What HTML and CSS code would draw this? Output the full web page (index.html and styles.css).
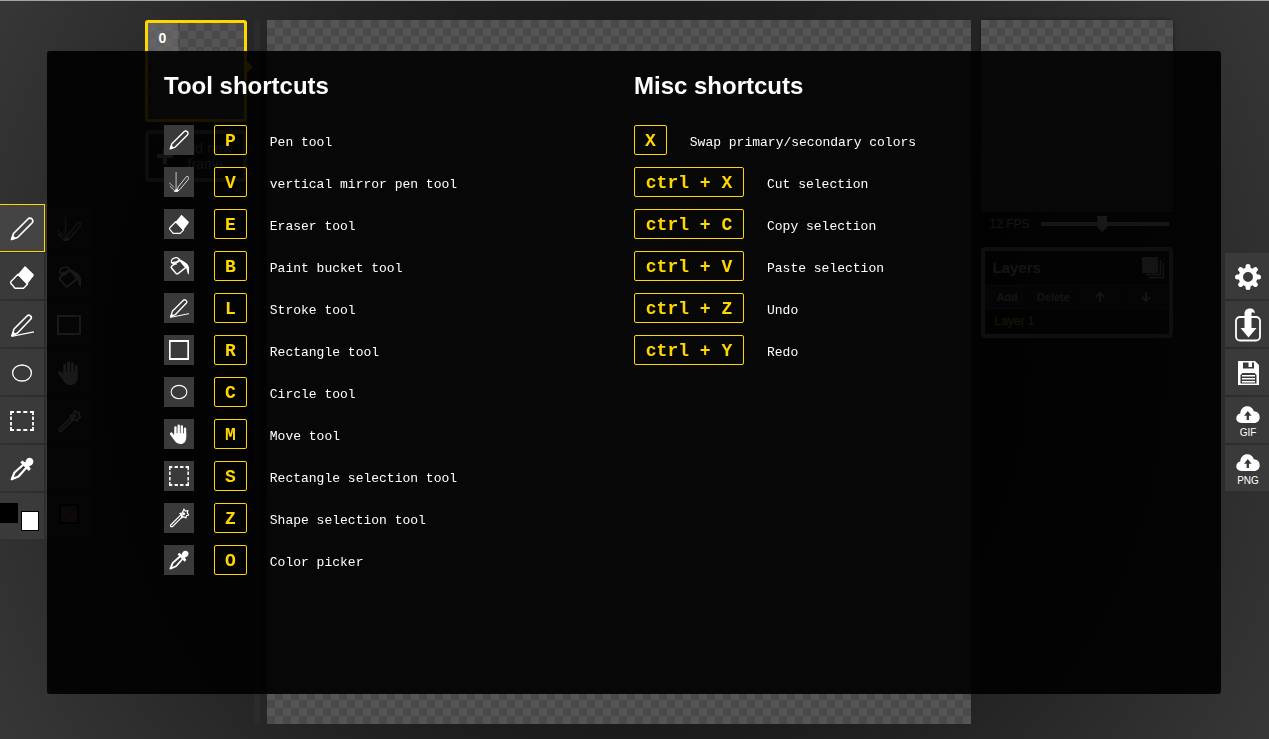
FILE: index.html
```html
<!DOCTYPE html>
<html lang="en">
<head>
  <meta charset="UTF-8" />
  <title>Piskel</title>
  <link rel="stylesheet" href="styles.css">
</head>
<body>
  <!-- icon sprite -->
  <svg class="sprite" width="0" height="0" aria-hidden="true">
    <symbol id="pen" viewBox="0 0 24 24">
      <path d="M1.5 22.5l2-6L18 2a2.500 2.500 0 0 1 4 4L7.500 20.500z" fill="none" stroke="currentColor" stroke-width="1.700" stroke-linejoin="round"/>
      <path d="M.8 23.200l1.800-5.200 3.400 3.400z"/>
    </symbol>
    <symbol id="mirror" viewBox="0 0 24 24">
      <path d="M8.500 0v22" fill="none" stroke="currentColor" stroke-width="1.400" opacity=".6"/>
      <path d="M0 12.500l6 6M1 17l7.500 7" fill="none" stroke="currentColor" stroke-width="1.200" opacity=".7"/>
      <path d="M9 24l2-6L20.500 6a1.800 1.800 0 0 1 2.900 2.400L13.500 20.500z" fill="none" stroke="currentColor" stroke-width="1.200" opacity=".8"/>
      <path d="M5.500 23.500l3-3.500 4 2-3.500 2.500z" opacity=".8"/>
    </symbol>
    <symbol id="eraser" viewBox="0 0 24 24">
      <path d="M15 1l8.300 8q.8 1 0 2.200L17 19.500 8 9.300z"/>
      <path d="M8 9.300l-7 7.200q-.8 1 0 2l4 4.700h8.500l4-4z" fill="none" stroke="currentColor" stroke-width="1.400" stroke-linejoin="round"/>
    </symbol>
    <symbol id="bucket" viewBox="0 0 24 24">
      <path d="M12.500 4.500L3 12.500q-1 1 0 2L8.600 21q1 1 2.200.2l9.400-7.400z" fill="none" stroke="currentColor" stroke-width="1.800" stroke-linejoin="round"/>
      <path d="M9.500 9.500C5 10 2.500 9 2.800 6 3.200 2.500 8.500 1 11.500 3c2 1.500 1 4-1.500 4.500-3 .3-4-1-6 1" fill="none" stroke="currentColor" stroke-width="1.500"/>
      <path d="M12 3.500c5 2.500 11.500 5 12 10.500V22c-2 0-2-4-3.600-8.200z"/>
    </symbol>
    <symbol id="stroke" viewBox="0 0 24 24">
      <path d="M2 22.500l2-6.500L17 3a2.400 2.400 0 0 1 3.600 3.300L7.500 20z" fill="none" stroke="currentColor" stroke-width="1.600" stroke-linejoin="round"/>
      <path d="M1.500 23.300L24 18.800" fill="none" stroke="currentColor" stroke-width="1.200"/>
      <path d="M1 23.500l2-5 3 2.700z"/>
    </symbol>
    <symbol id="rect" viewBox="0 0 24 20" preserveAspectRatio="none">
      <rect x="1" y="1" width="22" height="18" fill="none" stroke="currentColor" stroke-width="2"/>
    </symbol>
    <symbol id="circle" viewBox="0 0 24 24">
      <ellipse cx="12" cy="12" rx="9.400" ry="8" fill="none" stroke="currentColor" stroke-width="1.300"/>
    </symbol>
    <symbol id="hand" viewBox="0 0 24 24">
      <g fill="none" stroke="currentColor" stroke-width="2.900" stroke-linecap="round">
        <path d="M7.700 4.200V14M11.600 2v12M15.400 2.800V14M19.200 5.500V15"/>
        <path d="M2.800 11.800l4.200 5.700" stroke-width="3.400"/>
      </g>
      <path d="M6.300 11h14.300v6c0 4-3 7-7.200 7-3.600 0-5.600-2-7.400-5z"/>
    </symbol>
    <symbol id="select" viewBox="0 0 24 20" preserveAspectRatio="none">
      <path d="M0 1h4M6.700 1h4M13.300 1h4M20 1h4M0 19h4M6.700 19h4M13.300 19h4M20 19h4M1 0v4M1 5.600v3.400M1 11v3.400M1 16v4M23 0v4M23 5.600v3.400M23 11v3.400M23 16v4" fill="none" stroke="currentColor" stroke-width="1.800"/>
    </symbol>
    <symbol id="wand" viewBox="0 0 24 24">
      <path d="M14.500 8L2 20.500q-.6 2.500 2 1.800L16.500 10z" fill="none" stroke="currentColor" stroke-width="1.500"/>
      <path d="M18 1.500l1.500 2.200 3-.4-.6 2.800 1.800 2.200-2.800.9-.6 2.700-2.500-1.300-2.700 1 .2-2.800-2-2.100 2.700-1z" fill="none" stroke="currentColor" stroke-width="1.500"/>
      <circle cx="17.500" cy="7" r="1.800"/>
    </symbol>
    <symbol id="picker" viewBox="0 0 24 24">
      <path d="M13.500 7.500L4.500 15.500 1.700 22.300 8.500 19.500l8-9" fill="none" stroke="currentColor" stroke-width="2.200" stroke-linejoin="round"/>
      <path d="M10.300 5.400l2-2 3 2.200C15.800 2 18 .5 20.500.9c2.200.4 3.300 2.500 2.800 4.500-.4 2-2.300 3.200-4.300 3.600l1.800 3-2 2z"/>
    </symbol>
    <symbol id="gear" viewBox="0 0 26 26">
      <circle cx="13" cy="13" r="7.200" fill="none" stroke="currentColor" stroke-width="4.400"/>
      <path d="M13 2.500v3M13 20.500v3M2.500 13h3M20.500 13h3M5.600 5.600l2 2M18.400 18.400l2 2M5.600 20.400l2-2M18.400 7.600l2-2" fill="none" stroke="currentColor" stroke-width="5" stroke-linecap="round"/>
    </symbol>
    <symbol id="import" viewBox="0 0 26 34">
      <rect x="1" y="9" width="24" height="23.500" rx="4" fill="none" stroke="currentColor" stroke-width="1.800"/>
      <path d="M9.500 20V6c0-4 2.500-5.500 5.500-5.500 3.500 0 5 2 4.500 5-1-1.500-2.500-1.800-3-.5v15h5L13.500 29.500 5.500 20z"/>
    </symbol>
    <symbol id="save" viewBox="0 0 24 24">
      <path fill-rule="evenodd" d="M2 0h17l4 4v20H2zM7 1.500v6h11v-6h-2v4.500h-3.500V1.500zM4.500 14v8.500h16V14l-2-2h-12z"/>
      <path d="M6 14.800h13M6 17.800h13M6 20.800h13" stroke="currentColor" stroke-width="1.500"/>
    </symbol>
    <symbol id="cloud" viewBox="0 0 24 17">
      <path fill-rule="evenodd" d="M5.500 17C2 17 .3 15 .3 12.300c0-2.500 1.500-4.300 4-4.800C4.500 3 7.500.3 11.300.3c3.500 0 5.700 2 6.500 5 3.500.2 5.900 2.500 5.900 5.900S21.500 17 18 17zM11.800 5L8 9.800h2.600V14H13V9.800h2.600z"/>
    </symbol>
    <symbol id="layers" viewBox="0 0 22 22">
      <path d="M0 0h16v16H0z"/>
      <path d="M18.500 3v14.500H3.500M21.500 6v14.500H6.500" fill="none" stroke="currentColor" stroke-width="1.500"/>
    </symbol>
  </svg>

  <div class="app">
    <nav class="tools" aria-label="Tools">
      <button class="tool selected" aria-label="Pen"><svg><use href="#pen"/></svg></button>
      <button class="tool" aria-label="Vertical mirror pen"><svg><use href="#mirror"/></svg></button>
      <button class="tool" aria-label="Eraser"><svg><use href="#eraser"/></svg></button>
      <button class="tool" aria-label="Paint bucket"><svg><use href="#bucket"/></svg></button>
      <button class="tool" aria-label="Stroke"><svg><use href="#stroke"/></svg></button>
      <button class="tool" aria-label="Rectangle"><svg class="wide"><use href="#rect"/></svg></button>
      <button class="tool" aria-label="Circle"><svg><use href="#circle"/></svg></button>
      <button class="tool" aria-label="Move"><svg><use href="#hand"/></svg></button>
      <button class="tool" aria-label="Rectangle selection"><svg class="wide"><use href="#select"/></svg></button>
      <button class="tool" aria-label="Shape selection"><svg><use href="#wand"/></svg></button>
      <button class="tool" aria-label="Color picker"><svg><use href="#picker"/></svg></button>
      <div class="tool"></div>
      <div class="tool colors">
        <button class="swatch primary" aria-label="Primary color"></button>
        <button class="swatch secondary" aria-label="Secondary color"></button>
      </div>
      <div class="tool">
        <button class="swatch transparent" aria-label="Transparent">
          <svg viewBox="0 0 16 16"><path d="M0 16L16 0" stroke="#f00" stroke-width="1.500"/></svg>
        </button>
      </div>
    </nav>

    <main class="editor">
      <section class="frames">
        <div class="frame checker"><span class="frame-number">0</span></div>
        <button class="add-frame"><span class="plus"></span><span>Add new frame</span></button>
      </section>
      <div class="divider"></div>
      <div class="canvas checker"></div>
      <aside class="side">
        <div class="preview checker"></div>
        <div class="fps">
          <label for="fps">12 FPS</label>
          <input type="range" id="fps" min="0" max="25" value="12">
        </div>
        <section class="layers">
          <h3>Layers <svg><use href="#layers"/></svg></h3>
          <div class="layer-buttons">
            <button>Add</button>
            <button>Delete</button>
            <button aria-label="Move up"><svg viewBox="0 0 10 10"><path d="M5 10V1M1 5l4-4 4 4"/></svg></button>
            <button aria-label="Move down"><svg viewBox="0 0 10 10"><path d="M5 0v9M1 5l4 4 4-4"/></svg></button>
          </div>
          <p class="layer">Layer 1</p>
        </section>
      </aside>
    </main>

    <nav class="actions" aria-label="Actions">
      <button class="tool" aria-label="Settings"><svg class="gear"><use href="#gear"/></svg></button>
      <button class="tool" aria-label="Import"><svg class="import"><use href="#import"/></svg></button>
      <button class="tool" aria-label="Save"><svg><use href="#save"/></svg></button>
      <button class="tool export"><svg><use href="#cloud"/></svg>GIF</button>
      <button class="tool export"><svg><use href="#cloud"/></svg>PNG</button>
    </nav>
  </div>

  <div class="cheatsheet" role="dialog" aria-label="Keyboard shortcuts">
    <section>
      <h2>Tool shortcuts</h2>
      <ul>
        <li><span class="icon"><svg><use href="#pen"/></svg></span><kbd>P</kbd><span class="desc">Pen tool</span></li>
        <li><span class="icon"><svg><use href="#mirror"/></svg></span><kbd>V</kbd><span class="desc">vertical mirror pen tool</span></li>
        <li><span class="icon"><svg><use href="#eraser"/></svg></span><kbd>E</kbd><span class="desc">Eraser tool</span></li>
        <li><span class="icon"><svg><use href="#bucket"/></svg></span><kbd>B</kbd><span class="desc">Paint bucket tool</span></li>
        <li><span class="icon"><svg><use href="#stroke"/></svg></span><kbd>L</kbd><span class="desc">Stroke tool</span></li>
        <li><span class="icon"><svg><use href="#rect"/></svg></span><kbd>R</kbd><span class="desc">Rectangle tool</span></li>
        <li><span class="icon"><svg><use href="#circle"/></svg></span><kbd>C</kbd><span class="desc">Circle tool</span></li>
        <li><span class="icon"><svg><use href="#hand"/></svg></span><kbd>M</kbd><span class="desc">Move tool</span></li>
        <li><span class="icon"><svg><use href="#select"/></svg></span><kbd>S</kbd><span class="desc">Rectangle selection tool</span></li>
        <li><span class="icon"><svg><use href="#wand"/></svg></span><kbd>Z</kbd><span class="desc">Shape selection tool</span></li>
        <li><span class="icon"><svg><use href="#picker"/></svg></span><kbd>O</kbd><span class="desc">Color picker</span></li>
      </ul>
    </section>
    <section>
      <h2>Misc shortcuts</h2>
      <ul>
        <li><kbd>X</kbd><span class="desc">Swap primary/secondary colors</span></li>
        <li><kbd class="combo">ctrl + X</kbd><span class="desc">Cut selection</span></li>
        <li><kbd class="combo">ctrl + C</kbd><span class="desc">Copy selection</span></li>
        <li><kbd class="combo">ctrl + V</kbd><span class="desc">Paste selection</span></li>
        <li><kbd class="combo">ctrl + Z</kbd><span class="desc">Undo</span></li>
        <li><kbd class="combo">ctrl + Y</kbd><span class="desc">Redo</span></li>
      </ul>
    </section>
  </div>
</body>
</html>
```
FILE: styles.css
```css
:root {
  --gold: #ffd700;
  --cell: #3a3a3a;
  --grey: #ccc;
}

* {
  box-sizing: border-box;
}

body {
  margin: 0;
  font-family: "Liberation Sans", Arial, sans-serif;
  font-size: 12px;
  color: #fff;
  background: radial-gradient(circle, #000, #373737) fixed;
}

button {
  margin: 0;
  padding: 0;
  border: none;
  color: inherit;
  font-family: inherit;
  cursor: pointer;
}

svg {
  display: block;
  fill: currentColor;
}

.sprite {
  position: absolute;
}

.app {
  display: flex;
  height: 100vh;
  border-top: 1px solid #a5a5a5;
}

/* side toolbars */
.tools,
.actions {
  display: grid;
  align-content: center;
  grid-auto-rows: 46px;
  gap: 2px;
  padding-top: 4px;
}

.tools {
  grid-template-columns: 44px 46px;
}

.actions {
  grid-template-columns: 44px;
}

.tool {
  display: flex;
  align-items: center;
  justify-content: center;
  padding-top: 2px;
  background: var(--cell);
}

.actions .tool {
  padding-left: 2px;
}

.tool svg {
  width: 24px;
  height: 24px;
}

.tool svg.wide {
  height: 20px;
}

.tool svg.gear {
  width: 26px;
  height: 26px;
}

.tool svg.import {
  width: 26px;
  height: 34px;
}

.tool.selected {
  background: #444;
  outline: 1px solid var(--gold);
}

.export {
  flex-direction: column;
  gap: 4px;
  padding-top: 4px;
  font-size: 10px;
  line-height: 12px;
}

.tool.export svg {
  height: 17px;
}

.colors {
  justify-content: flex-start;
  gap: 3px;
}

.swatch {
  width: 18px;
  height: 20px;
  border: 1px solid #000;
}

.primary {
  background: #000;
  margin-bottom: 8px;
}

.secondary {
  background: #fff;
  margin-top: 8px;
}

.transparent {
  width: 20px;
  margin-bottom: 6px;
  background: #666;
  border-width: 2px;
}

.tool .swatch svg {
  width: 16px;
  height: 16px;
}

/* drawing area */
.editor {
  flex: 1;
  display: flex;
  justify-content: center;
  padding: 19px 0 15px;
}

.checker {
  background: repeating-conic-gradient(#4a4a4a 0 25%, #555 0 50%) 0 0 / 16px 16px;
}

.frames {
  width: 102px;
}

.frame {
  position: relative;
  aspect-ratio: 1;
  margin-bottom: 8px;
  border: 3px solid var(--gold);
  border-radius: 3px;
}

.frame::after {
  content: "";
  position: absolute;
  left: 100%;
  top: 38px;
  margin-left: 3px;
  border: 6px solid transparent;
  border-left-color: var(--gold);
  border-right: none;
}

.frame-number {
  display: block;
  width: 30px;
  height: 30px;
  font-size: 14px;
  font-weight: bold;
  line-height: 30px;
  text-align: center;
  background: rgba(110, 110, 110, 0.6);
}

.add-frame {
  display: flex;
  align-items: center;
  gap: 4px;
  width: 100%;
  padding: 6px 8px;
  border: 4px solid #888;
  border-radius: 4px;
  background: none;
  color: #aaa;
  font-size: 14px;
  line-height: 16px;
}

.plus {
  flex: none;
  width: 16px;
  height: 16px;
  background:
    linear-gradient(#ccc, #ccc) center / 4px 16px no-repeat,
    linear-gradient(#ccc, #ccc) center / 16px 4px no-repeat;
}

.divider {
  width: 6px;
  margin: 0 7px;
  background: #2b2b2b;
}

.canvas {
  height: 100%;
  aspect-ratio: 1;
}

.side {
  width: 192px;
  margin-left: 10px;
}

.preview {
  aspect-ratio: 1;
  box-shadow: 0 0 4px rgba(0, 0, 0, 0.4);
}

.fps {
  display: flex;
  align-items: center;
  gap: 11px;
  height: 24px;
  padding: 0 4px 0 9px;
  color: var(--grey);
}

.fps input {
  flex: 1;
  min-width: 0;
  height: 16px;
  margin: 0;
  appearance: none;
  background: linear-gradient(#ddd, #ddd) center / 100% 4px no-repeat;
}

.fps input::-webkit-slider-thumb {
  appearance: none;
  width: 10px;
  height: 16px;
  background: #eee;
  clip-path: polygon(0 0, 100% 0, 100% 70%, 50% 100%, 0 70%);
}

.layers {
  margin-top: 11px;
  border: 4px solid #999;
  border-radius: 4px;
}

.layers h3 {
  display: flex;
  align-items: center;
  justify-content: space-between;
  height: 34px;
  margin: 0;
  padding: 0 5px 0 8px;
  font-size: 15px;
  line-height: 18px;
  color: var(--grey);
}

.layers h3 svg {
  width: 22px;
  height: 22px;
}

.layer-buttons {
  display: grid;
  grid-template-columns: repeat(4, 1fr);
  gap: 1px;
  border: solid #555;
  border-width: 1px 0;
}

.layer-buttons button {
  display: flex;
  align-items: center;
  justify-content: center;
  height: 22px;
  background: #333;
  color: var(--grey);
  font-size: 11px;
  font-weight: bold;
}

.layer-buttons svg {
  width: 10px;
  height: 10px;
  fill: none;
  stroke: currentColor;
  stroke-width: 2;
}

.layer {
  margin: 0;
  padding: 0 10px;
  line-height: 25px;
  color: var(--gold);
}

/* shortcuts dialog */
.cheatsheet {
  position: fixed;
  inset: 51px 48px 45px 47px;
  display: grid;
  grid-template-columns: 1fr 1fr;
  padding: 20px 117px;
  border-radius: 3px;
  background: rgba(0, 0, 0, 0.9);
  overflow: auto;
}

.cheatsheet h2 {
  margin: 0 0 24px;
  font-size: 24px;
  line-height: 30px;
}

.cheatsheet ul {
  display: grid;
  gap: 12px;
  margin: 0;
  padding: 0;
  list-style: none;
}

.cheatsheet li {
  display: flex;
  align-items: center;
  height: 30px;
  font-family: "Liberation Mono", "Courier New", monospace;
}

.icon {
  display: flex;
  align-items: center;
  justify-content: center;
  width: 30px;
  height: 30px;
  margin-right: 20px;
  background: var(--cell);
}

.icon svg {
  width: 20px;
  height: 20px;
}

kbd {
  height: 30px;
  padding: 0 10px;
  border: 1px solid var(--gold);
  border-radius: 2px;
  color: var(--gold);
  font-family: inherit;
  font-size: 18px;
  font-weight: bold;
  line-height: 30px;
  text-align: center;
}

.combo {
  min-width: 110px;
}

.desc {
  margin-left: 23px;
  padding-top: 5px;
  font-size: 13px;
}
```
